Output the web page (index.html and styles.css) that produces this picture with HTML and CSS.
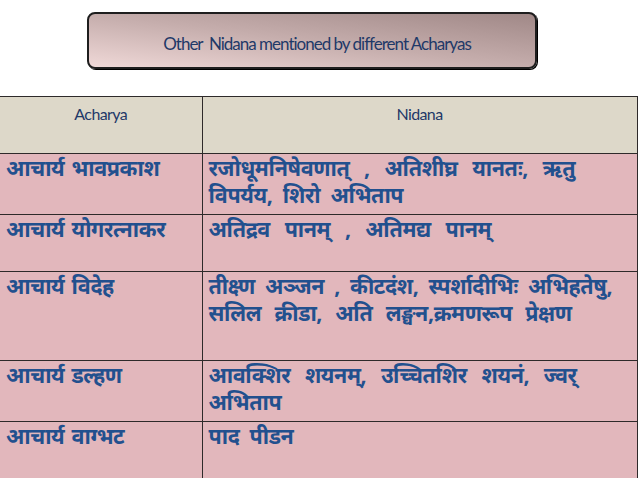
FILE: index.html
```html
<!DOCTYPE html>
<html lang="hi">
<head>
<meta charset="utf-8">
<title>Other Nidana</title>
<link rel="stylesheet" href="styles.css">
</head>
<body>
<div class="slide">
  <div class="title-box">
    <h1 class="title">Other&nbsp; Nidana mentioned by different Acharyas</h1>
  </div>
  <table class="nidana-table">
    <colgroup>
      <col class="col-acharya">
      <col class="col-nidana">
    </colgroup>
    <thead>
      <tr class="row-head">
        <th>Acharya</th>
        <th>Nidana</th>
      </tr>
    </thead>
    <tbody>
      <tr class="row-1">
        <td class="name">आचार्य भावप्रकाश</td>
        <td><span class="gap-lg">रजोधूमनिषेवणात् , अतिशीघ्र यानतः, ऋतु</span><br>विपर्यय, शिरो अभिताप</td>
      </tr>
      <tr class="row-2">
        <td class="name">आचार्य योगरत्नाकर</td>
        <td><span class="gap-lg">अतिद्रव पानम् , अतिमद्य पानम्</span></td>
      </tr>
      <tr class="row-3">
        <td class="name">आचार्य विदेह</td>
        <td>तीक्ष्ण अञ्जन , कीटदंश, स्पर्शादीभिः अभिहतेषु,<br><span class="gap-md">सलिल क्रीडा, अति लङ्घन,क्रमणरूप प्रेक्षण</span></td>
      </tr>
      <tr class="row-4">
        <td class="name">आचार्य डल्हण</td>
        <td><span class="gap-lg">आवक्शिर शयनम्, उच्चितशिर शयनं, ज्वर्</span><br>अभिताप</td>
      </tr>
      <tr class="row-5">
        <td class="name">आचार्य वाग्भट</td>
        <td>पाद पीडन</td>
      </tr>
    </tbody>
  </table>
</div>
</body>
</html>
```

FILE: styles.css
```css
html, body {
  margin: 0;
  padding: 0;
  background: #ffffff;
}

.slide {
  width: 638px;
  height: 478px;
  overflow: hidden;
  padding-top: 12px;
  box-sizing: border-box;
}

.title-box {
  margin-left: 87px;
  width: 450px;
  height: 57px;
  box-sizing: border-box;
  border: 2px solid #1e1e1e;
  border-radius: 8px;
  box-shadow: 1px 1px 0 #000;
  background: linear-gradient(to bottom left, #a08887 0%, #c5adac 50%, #efd8d7 100%);
  display: flex;
  align-items: center;
  justify-content: center;
}

.title {
  margin: 0;
  padding: 6px 0 0 10px;
  font-family: "Lato", "Open Sans", sans-serif;
  font-weight: 400;
  font-size: 17px;
  letter-spacing: -1px;
  color: #1f3968;
  white-space: nowrap;
}

.nidana-table {
  margin-top: 27px;
  width: 637px;
  border-collapse: collapse;
  table-layout: fixed;
}

.col-acharya { width: 202px; }
.col-nidana { width: 435px; }

.nidana-table th,
.nidana-table td {
  border: 1px solid #2e2a2a;
  vertical-align: top;
  padding: 0;
}

.nidana-table th {
  background: #ddd8c9;
  font-family: "Lato", "Open Sans", sans-serif;
  font-weight: 400;
  font-size: 16px;
  letter-spacing: -0.6px;
  color: #1f3968;
  text-align: center;
  padding-top: 7px;
}

.nidana-table td {
  background: #e2b7bc;
  font-family: "Noto Sans", "Noto Sans Devanagari", sans-serif;
  font-weight: 700;
  font-size: 21.5px;
  line-height: 27px;
  letter-spacing: -0.4px;
  word-spacing: 5px;
  color: #22508e;
  padding: 0 2px 0 6px;
  white-space: nowrap;
}

.nidana-table td.name { word-spacing: 2px; }

.nidana-table .gap-md { word-spacing: 8px; }
.nidana-table .gap-lg { word-spacing: 9.5px; }

.nidana-table tr > :first-child { border-left: none; }

.row-head { height: 57px; }
.row-1 { height: 61px; }
.row-2 { height: 57px; }
.row-3 { height: 89px; }
.row-4 { height: 61px; }
.row-5 { height: 57px; }
```
